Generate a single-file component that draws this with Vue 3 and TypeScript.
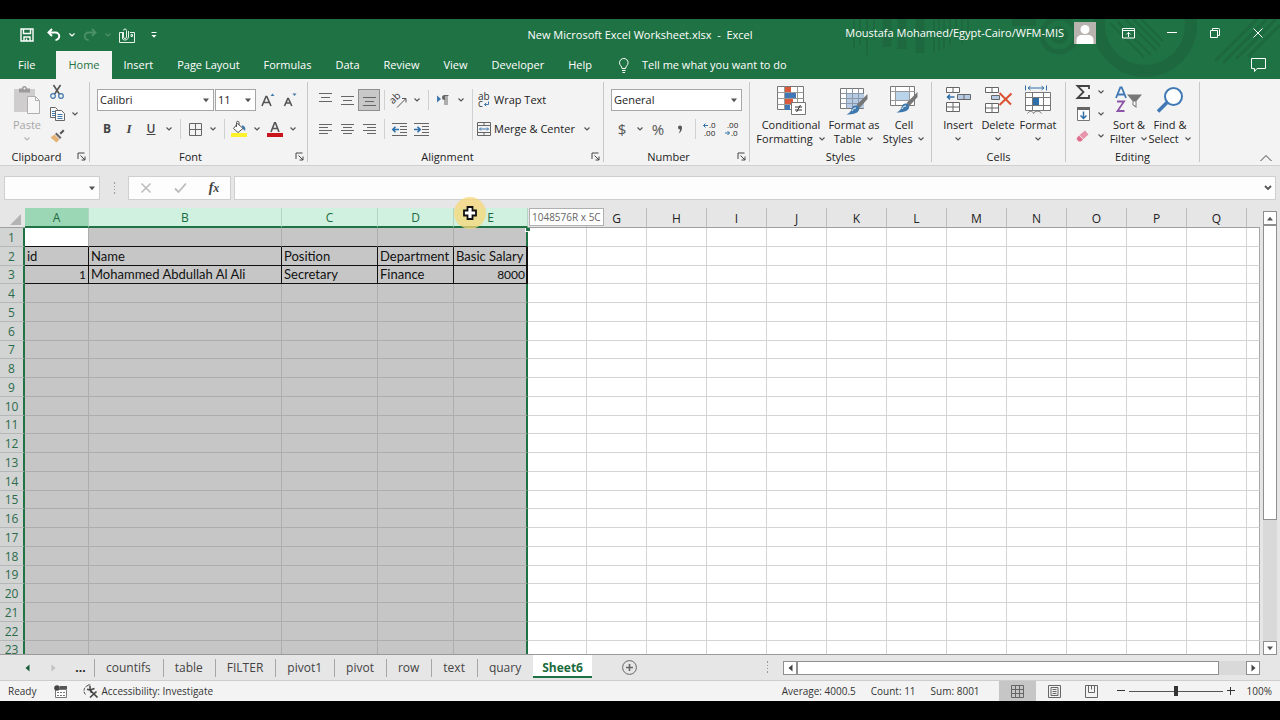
<script setup lang="ts">
import { h, ref } from 'vue'

const Chev = () =>
  h('svg', { viewBox: '0 0 8 6', class: 'chev', 'aria-hidden': 'true' }, [
    h('path', { d: 'M1.5 1.5 4 4l2.5-2.5', fill: 'none', stroke: 'currentColor', 'stroke-width': '1.2' }),
  ])
const Launcher = () =>
  h('button', { class: 'launcher', 'aria-label': 'More options' }, [
    h('svg', { viewBox: '0 0 9 9', width: 9, height: 9 }, [
      h('path', { d: 'M1 7V1h6.5M3.5 3.5 8 8M8 4.5V8H4.5', fill: 'none', stroke: '#444' }),
    ]),
  ])
const Caret = () =>
  h('svg', { viewBox: '0 0 8 5', class: 'caret', 'aria-hidden': 'true' }, [
    h('path', { d: 'M1 .5h6L4 4.2z', fill: '#555' }),
  ])

const tabs = ['File', 'Home', 'Insert', 'Page Layout', 'Formulas', 'Data', 'Review', 'View', 'Developer', 'Help']
const activeTab = ref('Home')

const columns = 'ABCDEFGHIJKLMNOPQ'.split('')
const rowCount = 23
const cells: Record<string, string> = {
  A2: 'id', B2: 'Name', C2: 'Position', D2: 'Department', E2: 'Basic Salary',
  A3: '1', B3: 'Mohammed Abdullah Al Ali', C3: 'Secretary', D3: 'Finance', E3: '8000',
}
const isNumber = (v?: string) => v !== undefined && /^\d+$/.test(v)
const isSelected = (c: string) => c <= 'E'
// The size tip covers the letter of the column right of the selection.
const coveredByTip = 'F'

const sheets = ['countifs', 'table', 'FILTER', 'pivot1', 'pivot', 'row', 'text', 'quary', 'Sheet6']
const activeSheet = ref('Sheet6')
const zoom = ref(50)
const vertical = ['Top Align', 'Middle Align', 'Bottom Align']
const textLines = [
  'M0 .5h13M0 3.5h9M0 6.5h13M0 9.5h9',
  'M0 .5h13M2 3.5h9M0 6.5h13M2 9.5h9',
  'M0 .5h13M4 3.5h9M0 6.5h13M4 9.5h9',
]
const horizontal = ['Align Left', 'Center', 'Align Right']
</script>

<template>
  <div class="screen">
    <header class="head">
      <svg class="decor" viewBox="0 0 440 60" width="440" height="60" fill="none" stroke="#1d683e" aria-hidden="true">
        <path d="M14 0v30M20 0v26M27 0v36M34 0v22M94 0v34M99 0v32M104 0v30M110 0v26M116 0v20M122 0v24M128 0v18" stroke-width="2" />
        <path d="M47 0v28M62 0v30M80 0v34" stroke-width="9" />
        <circle cx="219" cy="16" r="17" stroke-width="5" />
        <circle cx="219" cy="16" r="7" stroke-width="4" />
        <circle cx="305" cy="6" r="46" stroke-width="12" />
        <path d="M270 4l34 34M277 2l34 34M285 0l32 32M293 0l27 27M301 0l22 22" stroke-width="2" />
        <path d="M375 42 417 0M383 44 427 0M396 40 436 0M408 38l32-32" stroke-width="3" />
        <path d="M172 3h24" stroke-width="8" />
      </svg>
      <div class="titlebar">
        <div class="quick">
          <button class="q-save" aria-label="Save">
            <svg viewBox="0 0 14 14" width="14" height="14" fill="none" stroke="#fff" stroke-width="1.4"><path d="M1 1h12v12H1z" /><path d="M3.5 1v4.5h7V1" /><path d="M4 13V9h6v4" /><path d="M6.5 10.5V13" /></svg>
          </button>
          <button class="q-undo" aria-label="Undo">
            <svg viewBox="0 0 14 14" width="14" height="14" fill="none" stroke="#fff" stroke-width="2"><path d="M5 1 1.5 4.5 5 8" /><path d="M2 4.500h6.500a3.500 3.500 0 0 1 0 7.500" /></svg>
          </button>
          <button class="q-chev light" aria-label="Undo list"><Chev /></button>
          <button class="q-undo dim" aria-label="Redo" disabled>
            <svg viewBox="0 0 14 14" width="14" height="14" fill="none" stroke="#4b9069" stroke-width="1.8"><path d="M9 1l3.500 3.500L9 8" /><path d="M12 4.500H5.500a3.500 3.500 0 0 0 0 7.500" /></svg>
          </button>
          <button class="q-chev dim" aria-label="Redo list" disabled><Chev /></button>
          <button class="q-mail" aria-label="Attach to mail">
            <svg viewBox="0 0 16 15" width="16" height="15" fill="none" stroke="#e6f2ea"><path d="M3 4.500H.5v10h15v-10H11" /><path d="M4.500 4v5a1.500 1.500 0 0 0 3 0V2.500a1.500 1.500 0 0 0-3 0M9.500 3v6a3.500 3.500 0 0 1-6 2V4" /><path d="M12 6.500h1.500v2H12z" /></svg>
          </button>
          <button class="q-more" aria-label="Customize toolbar">
            <svg viewBox="0 0 8 8" width="8" height="8"><path d="M1.500 1.500h5" stroke="#fff" /><path d="M1.500 4h5L4 6.800z" fill="#fff" /></svg>
          </button>
        </div>
        <div class="title">New Microsoft Excel Worksheet.xlsx&nbsp; -&nbsp; Excel</div>
        <div class="account">
          <span>Moustafa Mohamed/Egypt-Cairo/WFM-MIS</span>
          <svg class="avatar" viewBox="0 0 22 22" width="22" height="22"><path d="M0 0h22v22H0z" fill="#b9b3b0" /><circle cx="11" cy="7.500" r="4.500" fill="#fff" /><path d="M2.500 22v-3.500c0-4 3-5.500 4.500-5.500h8c1.500 0 4.500 1.500 4.500 5.500V22z" fill="#fff" /></svg>
          <button class="win" aria-label="Ribbon display options"><svg viewBox="0 0 13 11" width="13" height="11" fill="none" stroke="#fff"><path d="M.5.500h12v9.500H.5zM.5 2.500h12M6.500 9V4.500M4.300 6.500 6.500 4.300l2.200 2.200" /></svg></button>
          <button class="win" aria-label="Minimize"><svg viewBox="0 0 10 10" width="10" height="10" stroke="#fff"><path d="M0 4.500h10" /></svg></button>
          <button class="win" aria-label="Restore"><svg viewBox="0 0 10 10" width="10" height="10" fill="none" stroke="#fff"><path d="M.5 2.500h7v7h-7z" /><path d="M2.500 2.500v-2h6a1 1 0 0 1 1 1v6h-2" /></svg></button>
          <button class="win" aria-label="Close"><svg viewBox="0 0 10 10" width="10" height="10" stroke="#fff"><path d="M.5.500l9 9M9.500.500l-9 9" /></svg></button>
        </div>
      </div>
      <nav class="tabs">
        <button v-for="t in tabs" :key="t" :class="{ on: t === activeTab, file: t === 'File' }" @click="activeTab = t">{{ t }}</button>
        <button class="tell">
          <svg viewBox="0 0 12 15" width="12" height="15" fill="none" stroke="#fff"><path d="M4 10.500C4 8 1.500 7.500 1.500 4.800a4.300 4.300 0 0 1 8.600 0c0 2.700-2.500 3.200-2.500 5.700zM4 12.500h3.600M4.500 14.500h2.600" /></svg>
          <span>Tell me what you want to do</span>
        </button>
        <button class="comment" aria-label="Comments"><svg viewBox="0 0 15 14" width="15" height="14" fill="none" stroke="#fff"><path d="M.5.500h14v10H6l-2.500 3v-3h-3z" /></svg></button>
      </nav>
    </header>

    <section class="ribbon" aria-label="Ribbon">
      <div class="group clipboard">
        <div class="body">
          <button class="big paste" disabled>
            <svg viewBox="0 0 28 30" width="28" height="30"><path d="M1 4h21v23H1z" fill="#cfcdcd" /><path d="M6 3.500h3a2.500 2.500 0 0 1 5 0h3v4H6z" fill="#9c9a9a" /><circle cx="11.500" cy="3.500" r="1" fill="#f3f3f3" /><path d="M14.500 11.500h8l4 4v13h-12z" fill="#f6f6f6" stroke="#b0aeae" /><path d="M22.500 11.500v4h4" fill="none" stroke="#b0aeae" /></svg>
            <span>Paste</span>
            <Chev />
          </button>
          <div class="stack clip">
            <div><button class="ic" aria-label="Cut"><svg viewBox="0 0 14 14" width="14" height="14" fill="none"><path d="M3.500 0 9.300 9M10.500 0 4.700 9" stroke="#555" stroke-width="1.600" /><circle cx="3" cy="11" r="2.300" stroke="#3f78ad" stroke-width="1.200" /><circle cx="11" cy="11" r="2.300" stroke="#3f78ad" stroke-width="1.200" /></svg></button></div>
            <div><button class="ic" aria-label="Copy"><svg viewBox="0 0 15 14" width="15" height="14" fill="#f8f8f8" stroke="#666"><path d="M.5.500h5l2 2v8h-7z" /><path d="M2 4.500h3M2 6.500h3M2 8.500h3" stroke="#3f78ad" /><path d="M5.500 3.500h6l3 3v7h-9z" /><path d="M7.500 7.500h5M7.500 9.500h5M7.500 11.500h5" stroke="#3f78ad" /></svg></button><button class="ch" aria-label="Copy options"><Chev /></button></div>
            <div><button class="ic" aria-label="Format Painter"><svg viewBox="0 0 15 14" width="15" height="14"><path d="M9.500 4 13 .5 14.500 2 11 5.500z" fill="#555" /><path d="M6.500 3.500 11.500 8.500 10 10 5 5z" fill="#666" /><path d="M4.500 5.500 9.500 10.500 6.500 13.500.5 8.500z" fill="#e3b274" /></svg></button></div>
          </div>
        </div>
        <footer><span>Clipboard</span><Launcher /></footer>
      </div>

      <div class="group font">
        <div class="body rows">
          <div class="line">
            <label class="combo wide"><select aria-label="Font"><option>Calibri</option></select><Caret /></label>
            <label class="combo size"><select aria-label="Font size"><option>11</option></select><Caret /></label>
            <button class="ic grow" aria-label="Increase font size"><svg viewBox="0 0 14 14" width="14" height="14"><path d="M1 13 5 3.500h.8L10 13M2.500 9.500h6" fill="none" stroke="#555" stroke-width="1.600" /><path d="M9.500 3h4L11.500.5z" fill="#3f78ad" /></svg></button>
            <button class="ic" aria-label="Decrease font size"><svg viewBox="0 0 14 14" width="14" height="14"><path d="M1.500 13 4.800 5.500h.6L8.800 13M2.800 10h5" fill="none" stroke="#555" stroke-width="1.600" /><path d="M9.500.500h4L11.500 3z" fill="#3f78ad" /></svg></button>
          </div>
          <div class="line">
            <button class="ic letter bold">B</button>
            <button class="ic letter italic">I</button>
            <button class="ic letter under">U</button>
            <button class="ch" aria-label="Underline options"><Chev /></button>
            <i class="sep" />
            <button class="ic" aria-label="Borders"><svg viewBox="0 0 13 13" width="13" height="13" fill="none" stroke="#666"><path d="M.5.500h12v12H.5zM6.500.500v12M.5 6.500h12" /></svg></button>
            <button class="ch" aria-label="Border options"><Chev /></button>
            <i class="sep" />
            <button class="ic" aria-label="Fill color"><svg viewBox="0 0 16 16" width="16" height="16"><path d="M6.500 2.500 12 7.500 7 11.500 2.500 7.500z" fill="#fff" stroke="#555" /><path d="M5.500 6V1.500a1 1 0 0 1 2.500 0V4" fill="none" stroke="#555" /><path d="M10.500 4.500c3 0 4.500 2 3.500 5.500L12 8z" fill="#3f78ad" /><path d="M0 12h16v4H0z" fill="#fdf22b" /></svg></button>
            <button class="ch" aria-label="Fill color options"><Chev /></button>
            <button class="ic" aria-label="Font color"><svg viewBox="0 0 16 16" width="16" height="16"><path d="M4 11 7.600 1.800h.8L12 11M5.500 7.500h5" fill="none" stroke="#555" stroke-width="1.600" /><path d="M0 12h16v4H0z" fill="#c8141b" /></svg></button>
            <button class="ch" aria-label="Font color options"><Chev /></button>
          </div>
        </div>
        <footer><span>Font</span><Launcher /></footer>
      </div>

      <div class="group alignment">
        <div class="body">
          <div class="rows">
            <div class="line">
              <button v-for="(name, i) in vertical" :key="name" class="ic" :class="['v' + i]" :aria-label="name">
                <svg viewBox="0 0 13 9" width="13" height="9" stroke="#666"><path d="M0 .5h13M2 4.500h9M0 8.500h13" /></svg>
              </button>
              <i class="sep" />
              <button class="ic" aria-label="Orientation"><svg viewBox="0 0 16 16" width="16" height="16"><text x="1" y="12" font-size="10" fill="#333" transform="rotate(-45 2 11)">ab</text><path d="M6 15.500 14.500 7M11 6.500h4v4" fill="none" stroke="#555" /></svg></button>
              <button class="ch" aria-label="Orientation options"><Chev /></button>
              <i class="sep" />
              <button class="ic" aria-label="Text direction"><svg viewBox="0 0 14 12" width="14" height="12"><path d="M1 1.500 5 5 1 8.500z" fill="#3f78ad" /><path d="M12.500 1H8.500a2.500 2.500 0 0 0 0 5v5h1V2h1v9h1V2h1z" fill="#666" /></svg></button>
              <button class="ch" aria-label="Text direction options"><Chev /></button>
            </div>
            <div class="line">
              <button v-for="(d, i) in textLines" :key="i" class="ic" :aria-label="horizontal[i]">
                <svg viewBox="0 0 13 10" width="13" height="10" stroke="#666"><path :d="d" /></svg>
              </button>
              <i class="sep" />
              <button class="ic" aria-label="Decrease indent"><svg viewBox="0 0 15 13" width="15" height="13" stroke="#666" fill="none"><path d="M0 .5h15M8 3.500h7M8 6.500h7M8 9.500h7M0 12.500h15" /><path d="M7 6.500H1M3.500 3.800.8 6.500l2.700 2.700" stroke="#2f6fa8" stroke-width="1.600" /></svg></button>
              <button class="ic" aria-label="Increase indent"><svg viewBox="0 0 15 13" width="15" height="13" stroke="#666" fill="none"><path d="M0 .5h15M8 3.500h7M8 6.500h7M8 9.500h7M0 12.500h15" /><path d="M0 6.500h6M3.500 3.800l2.700 2.700-2.700 2.700" stroke="#2f6fa8" stroke-width="1.600" /></svg></button>
            </div>
          </div>
          <i class="sep tall" />
          <div class="rows">
            <button class="line text"><svg viewBox="0 0 16 16" width="16" height="16"><text x="2" y="8" font-size="10" fill="#333">ab</text><text x="2" y="15" font-size="10" fill="#333">c</text><path d="M12.500 9.500v3H8.500M10.200 10.800l-1.700 1.700 1.700 1.700" fill="none" stroke="#3f78ad" /></svg><span>Wrap Text</span></button>
            <button class="line text"><svg viewBox="0 0 16 15" width="16" height="15" fill="none" stroke="#666"><path d="M1.500.500h13v13h-13zM1.500 3.500h13M1.500 10.500h13M8 .5v3M8 10.500v3" /><path d="M3.500 7h9M5 5.500 3.500 7 5 8.500M11 5.500 12.500 7 11 8.500" stroke="#3f78ad" /></svg><span>Merge &amp; Center</span><Chev class="far" /></button>
          </div>
        </div>
        <footer><span>Alignment</span><Launcher /></footer>
      </div>

      <div class="group number">
        <div class="body rows">
          <div class="line"><label class="combo full"><select aria-label="Number format"><option>General</option></select><Caret /></label></div>
          <div class="line">
            <button class="ic sym">$</button>
            <button class="ch" aria-label="Currency options"><Chev /></button>
            <button class="ic sym">%</button>
            <button class="ic sym" aria-label="Comma style"><svg viewBox="0 0 6 9" width="6" height="9"><path d="M1 2.500a2 2 0 0 1 4 0C5 5 4 7.500 1.500 8.500 2.500 7 3 6 3 4.500a2 2 0 0 1-2-2z" fill="#555" /></svg></button>
            <i class="sep" />
            <button class="ic" aria-label="Increase decimal"><svg viewBox="0 0 15 14" width="15" height="14"><text x="6" y="6" font-size="8" fill="#222">.0</text><text x="1" y="14" font-size="8" fill="#222">.00</text><path d="M5 3.500H.5M2.500 1.500l-2 2 2 2" fill="none" stroke="#2f6fa8" /></svg></button>
            <button class="ic" aria-label="Decrease decimal"><svg viewBox="0 0 15 14" width="15" height="14"><text x="2" y="6" font-size="8" fill="#222">.00</text><text x="6" y="14" font-size="8" fill="#222">.0</text><path d="M0 11h4.500M2.500 9l2 2-2 2" fill="none" stroke="#2f6fa8" /></svg></button>
          </div>
        </div>
        <footer><span>Number</span><Launcher /></footer>
      </div>

      <div class="group styles">
        <div class="body">
          <button class="big w68"><svg viewBox="0 0 30 30" width="30" height="30"><path d="M1.500 1.500h26v23h-26z" fill="#fff" stroke="#777" /><path d="M1.500 7.500h26M1.500 13.500h26M1.500 19.500h26M8.500 1.500v23M21.500 1.500v23" stroke="#999" fill="none" /><path d="M9 2h6v5H9zM9 14h8v5H9z" fill="#d8593b" /><path d="M9 8h11v5H9zM9 20h5v5H9z" fill="#3f78b5" /><path d="M15.500 17.500h14v12h-14z" fill="#fff" stroke="#777" /><path d="M19 22h7M19 25h7M24.500 20l-4 7" stroke="#333" fill="none" /></svg><span>Conditional<br />Formatting <Chev /></span></button>
          <button class="big w58"><svg viewBox="0 0 28 30" width="28" height="30"><path d="M.5 3.500h23v20H.5z" fill="#fff" stroke="#777" /><path d="M6.500 9H24v14H6.500z" fill="#b8cbe4" /><path d="M.5 8.500h23M.5 13.500h23M.5 18.500h23M6.500 3.500v20M12.500 3.500v20M18.500 3.500v20" stroke="#8b98a8" fill="none" /><path d="M27.500 9v5l-8 9-3-3z" fill="#777" /><path d="M15.500 20.500c3 0 4.500 2 3.500 4.500-1.500 3.500-6 4.500-12.500 4.500 4-2 4.500-4 5.500-6.500.8-1.700 2-2.500 3.500-2.500z" fill="#3f78ad" /><path d="M12 26c1-2.500 2.500-3 4-3" stroke="#fff" fill="none" /></svg><span>Format as<br />Table <Chev /></span></button>
          <button class="big w42"><svg viewBox="0 0 28 30" width="28" height="30"><path d="M.5 1.500h24v19H.5z" fill="#fff" stroke="#777" /><path d="M5.500 1.500v19M19.500 1.500v19M.5 6.500h24M.5 15.500h24" stroke="#999" fill="none" /><path d="M6 7h13v8H6z" fill="#b8d3ea" /><path d="M27.500 7v5l-8 9-3-3z" fill="#777" /><path d="M15.500 18.500c3 0 4.500 2 3.500 4.500-1.500 3.500-6 4.500-12.500 4.500 4-2 4.500-4 5.500-6.500.8-1.700 2-2.500 3.500-2.500z" fill="#3f78ad" /><path d="M12 24c1-2.500 2.500-3 4-3" stroke="#fff" fill="none" /></svg><span>Cell<br />Styles <Chev /></span></button>
        </div>
        <footer><span>Styles</span></footer>
      </div>

      <div class="group cells">
        <div class="body">
          <button class="big w40"><svg viewBox="0 0 26 30" width="26" height="30" fill="#fff" stroke="#666"><path d="M1.500 2.500h13v5h-13zM8 2.500v5M1.500 17.500h13v9h-13zM8 17.500v9M1.500 22h13" /><path d="M12.500 9.500h13v5h-13zM19 9.500v5" fill="#b8cbe4" /><path d="M9.500 12h-7M5 9.500 2.500 12 5 14.500" fill="none" stroke="#2f6fa8" stroke-width="1.500" /></svg><span>Insert</span><Chev /></button>
          <button class="big w40"><svg viewBox="0 0 28 30" width="28" height="30" fill="#fff" stroke="#666"><path d="M1.500 2.500h13v5h-13zM8 2.500v5M1.500 18.500h13v9h-13zM8 18.500v9M1.500 23h13" /><path d="M7.500 10.500h8v4h-8z" fill="#b8cbe4" /><path d="M15.500 8 27 19.500M27.500 8.500 15.500 20" fill="none" stroke="#d9512f" stroke-width="2" /></svg><span>Delete</span><Chev /></button>
          <button class="big w40"><svg viewBox="0 0 28 30" width="28" height="30" fill="#fff" stroke="#777"><path d="M1.500 7.500h25v18h-25zM8.500 7.500v18M19.500 7.500v18M1.500 12.500h25M1.500 20.500h25" /><path d="M9 13h6v7H9z" fill="#2f6fa8" stroke="none" /><path d="M3.500 28.500c2-3 5-3 6 0 1-3 7-3 8 0" fill="none" /><path d="M1.500.500v5M22.500.500v5M4 3h16M6.500 1 4 3l2.500 2M17.500 1 20 3l-2.500 2" fill="none" stroke="#2f6fa8" /></svg><span>Format</span><Chev /></button>
        </div>
        <footer><span>Cells</span></footer>
      </div>

      <div class="group editing">
        <div class="body">
          <div class="stack edit">
            <div><button class="ic" aria-label="AutoSum"><svg viewBox="0 0 14 14" width="14" height="14"><path d="M13 4V1H1.500l6 6-6 6H13v-3" fill="none" stroke="#444" stroke-width="1.800" /></svg></button><button class="ch" aria-label="AutoSum options"><Chev /></button></div>
            <div><button class="ic" aria-label="Fill"><svg viewBox="0 0 13 14" width="13" height="14"><path d="M.5.500h12v13H.5z" fill="#fff" stroke="#777" /><path d="M0 0h13v3H0z" fill="#666" /><path d="M6.500 4.500v7M3.500 8.500l3 3 3-3" fill="none" stroke="#2f6fa8" stroke-width="1.500" /></svg></button><button class="ch" aria-label="Fill options"><Chev /></button></div>
            <div><button class="ic" aria-label="Clear"><svg viewBox="0 0 14 12" width="14" height="12"><path d="M9 .5l3.500 4-5 4.500-4-4z" fill="#e794ad" /><path d="M3 5.500l4 4-2 2H2.500L.8 9.500V8z" fill="#e0708f" /></svg></button><button class="ch" aria-label="Clear options"><Chev /></button></div>
          </div>
          <button class="big w42"><svg viewBox="0 0 28 30" width="28" height="30"><path d="M1 13 5.300 2.500h1.400L11 13M2.800 9.500h6.400" fill="none" stroke="#3f78b5" stroke-width="1.800" /><path d="M2 16.500h7L2.500 26H9.500" fill="none" stroke="#8b54a8" stroke-width="1.800" /><path d="M12 9.500h15l-5.500 6.500v7l-4-3v-4z" fill="#777" /><path d="M18.500 16.500v3l2 1.500v-4.500z" fill="#fff" /></svg><span>Sort &amp;<br />Filter <Chev /></span></button>
          <button class="big w40"><svg viewBox="0 0 28 30" width="28" height="30" fill="none"><circle cx="17.500" cy="11.500" r="8.500" fill="#fff" stroke="#3f78b5" stroke-width="2" /><path d="M11 17.500 2 26.500" stroke="#3f78b5" stroke-width="3.500" /></svg><span>Find &amp;<br />Select <Chev /></span></button>
        </div>
        <footer><span>Editing</span></footer>
      </div>
      <button class="collapse" aria-label="Collapse ribbon"><svg viewBox="0 0 12 8" width="12" height="8" fill="none" stroke="#444"><path d="M.5 7 6 1.500 11.500 7" /></svg></button>
    </section>

    <section class="formula">
      <label class="combo namebox"><input aria-label="Name box" /><Caret /></label>
      <svg class="dots" viewBox="0 0 3 12" width="3" height="12" fill="#999"><path d="M1 0h1v2H1zM1 4h1v1H1zM1 7h1v1H1zM1 10h1v2H1z" /></svg>
      <div class="fx">
        <button aria-label="Cancel"><svg viewBox="0 0 12 12" width="12" height="12" stroke="#bbb" stroke-width="1.500"><path d="M1.500 1.500l9 9M10.500 1.500l-9 9" /></svg></button>
        <button aria-label="Enter"><svg viewBox="0 0 13 12" width="13" height="12" fill="none" stroke="#bbb" stroke-width="1.800"><path d="M1 6.500 4.500 10 12 1.500" /></svg></button>
        <button class="fn" aria-label="Insert function"><span>f<small>x</small></span></button>
      </div>
      <label class="bar"><input aria-label="Formula bar" /><svg viewBox="0 0 8 6" width="8" height="6" fill="none" stroke="#555" stroke-width="1.800"><path d="M1 1l3 3 3-3" /></svg></label>
    </section>

    <main class="work">
      <div class="sheet">
        <table>
          <colgroup>
            <col class="c-row" /><col class="c-a" /><col class="c-b" /><col class="c-c" /><col class="c-d" /><col class="c-e" /><col class="c-f" />
            <col v-for="n in 11" :key="n" class="c-std" /><col />
          </colgroup>
          <thead>
            <tr>
              <th class="corner"><svg viewBox="0 0 11 11" width="11" height="11"><path d="M11 0v11H0z" fill="#b4b4b4" /></svg></th>
              <th v-for="c in columns" :key="c" :class="{ sel: isSelected(c), first: c === 'A' }">{{ c === coveredByTip ? '' : c }}</th>
              <th class="edge" />
            </tr>
          </thead>
          <tbody>
            <tr v-for="r in rowCount" :key="r" :class="{ boxed: r === 2 || r === 3, above: r === 1 }">
              <th>{{ r }}</th>
              <td v-for="c in columns" :key="c" :class="{ sel: isSelected(c), last: c === 'E', cursor: c + r === 'A1', num: isNumber(cells[c + r]) }">{{ cells[c + r] }}</td>
              <td class="edge" />
            </tr>
          </tbody>
        </table>
      </div>
      <div class="vscroll">
        <button aria-label="Scroll up"><svg viewBox="0 0 8 5" width="8" height="5"><path d="M1 4.500h6L4 .8z" fill="#555" /></svg></button>
        <div class="vthumb" />
        <div class="vtrack" />
        <button aria-label="Scroll down"><svg viewBox="0 0 8 5" width="8" height="5"><path d="M1 .5h6L4 4.200z" fill="#555" /></svg></button>
      </div>
      <i class="handle" />
      <div class="tip">1048576R x 5C</div>
      <div class="halo"><svg viewBox="0 0 14 14" width="14" height="14"><path d="M4.500 1h5v3.500H13v5H9.500V13h-5V9.500H1v-5h3.500z" fill="#fff" stroke="#111" stroke-width="1.800" /></svg></div>
    </main>

    <nav class="sheets">
      <div class="arrows">
        <button aria-label="Previous sheet"><svg viewBox="0 0 5 8" width="5" height="8"><path d="M4.500.500v7L.5 4z" fill="#185c37" /></svg></button>
        <button aria-label="Next sheet"><svg viewBox="0 0 5 8" width="5" height="8"><path d="M.5.500v7l4-3.500z" fill="#c0c0c0" /></svg></button>
        <button class="ell">...</button>
      </div>
      <button v-for="s in sheets" :key="s" class="tab" :class="{ on: s === activeSheet }" @click="activeSheet = s">{{ s }}</button>
      <button class="add" aria-label="New sheet"><svg viewBox="0 0 15 15" width="15" height="15" fill="none" stroke="#666"><circle cx="7.500" cy="7.500" r="6.900" /><path d="M7.500 4v7M4 7.500h7" stroke-width="1.600" /></svg></button>
      <svg class="dots" viewBox="0 0 3 12" width="3" height="12" fill="#999"><path d="M1 0h1v2H1zM1 4h1v1H1zM1 7h1v1H1zM1 10h1v2H1z" /></svg>
      <div class="hscroll">
        <button aria-label="Scroll left"><svg viewBox="0 0 5 8" width="5" height="8"><path d="M4.500.500v7L.5 4z" fill="#444" /></svg></button>
        <div class="hthumb" />
        <div class="htrack" />
        <button aria-label="Scroll right"><svg viewBox="0 0 5 8" width="5" height="8"><path d="M.5.500v7l4-3.500z" fill="#444" /></svg></button>
      </div>
    </nav>

    <footer class="status">
      <span class="ready">Ready</span>
      <svg class="macro" viewBox="0 0 13 13" width="13" height="13"><path d="M1.500 4.500h11v8h-11z" fill="#fff" stroke="#777" /><path d="M6 1h7v3H6z" fill="#555" /><circle cx="3" cy="3" r="2.800" fill="#444" /><path d="M3 7.500h8M3 10.500h8" stroke="#777" stroke-dasharray="2 1" /></svg>
      <button class="access">
        <svg viewBox="0 0 15 14" width="15" height="14" fill="none" stroke="#444"><path d="M5 1.500A5.500 5.500 0 0 0 3 11M5 1l2.500 0" stroke-dasharray="3 1" /><path d="M7 2v4l-3-.8M7 6l4.500-1.500M7 6l1.500 3" stroke-width="1.500" /><path d="M7.500 6.500l7 7M13.500 7.500l-6.500 6" stroke-width="1.700" /></svg>
        <span>Accessibility: Investigate</span>
      </button>
      <span class="sums"><span>Average: 4000.5</span><span>Count: 11</span><span>Sum: 8001</span></span>
      <div class="views">
        <button class="on" aria-label="Normal view"><svg viewBox="0 0 13 13" width="13" height="13" fill="none" stroke="#666"><path d="M.5.500h12v12H.5zM4.500.500v12M8.500.500v12M.5 4.500h12M.5 8.500h12" /></svg></button>
        <button aria-label="Page layout view"><svg viewBox="0 0 13 13" width="13" height="13" fill="none" stroke="#666"><path d="M.5.500h12v12H.5zM3 2.500h7v8H3zM4.500 4.500h4M4.500 6.500h4M4.500 8.500h4" /></svg></button>
        <button aria-label="Page break view"><svg viewBox="0 0 13 13" width="13" height="13" fill="none" stroke="#666"><path d="M.5.500h12v12H.5zM3.500 .5v7h6v-7M6.500.500v4" /></svg></button>
      </div>
      <div class="zoom">
        <button aria-label="Zoom out"><svg viewBox="0 0 8 8" width="8" height="8" stroke="#333"><path d="M0 3.500h8" /></svg></button>
        <input v-model="zoom" type="range" min="0" max="100" aria-label="Zoom" />
        <button aria-label="Zoom in"><svg viewBox="0 0 8 8" width="8" height="8" stroke="#333"><path d="M0 3.500h8M3.500 0v8" /></svg></button>
        <span>100%</span>
      </div>
    </footer>
  </div>
</template>

<style>
body { background: #000; }
</style>

<style scoped>
* { box-sizing: border-box; }
.screen {
  height: 100vh; padding: 19px 0; background: #000; display: flex; flex-direction: column;
  font-family: "Open Sans", "Noto Sans", sans-serif; font-size: 11px; line-height: 14px; color: #222;
}
button, input, select { font: inherit; color: inherit; border: 0; padding: 0; margin: 0; background: none; outline: 0; border-radius: 0; }
button { display: flex; align-items: center; justify-content: center; flex: none; white-space: nowrap; }
svg { flex: none; display: block; overflow: visible; }
.chev { width: 8px; height: 6px; color: #555; }
.caret { width: 8px; height: 5px; }

.head { position: relative; background: #1f7244; color: #fff; flex: none; overflow: hidden; }
.decor { position: absolute; right: 0; top: 0; }
.titlebar { position: relative; height: 32px; display: grid; grid-template-columns: 1fr auto 1fr; align-items: center; }
.quick { display: flex; align-items: center; padding-left: 16px; }
.q-save { width: 22px; margin-right: 5px; }
.q-undo { width: 22px; }
.q-chev { width: 14px; }
.light .chev { color: #fff; }
.dim .chev { color: #4b9069; }
.q-mail { width: 24px; }
.q-more { width: 16px; margin-left: 7px; padding: 4px; }
.account { display: flex; align-items: center; justify-content: flex-end; padding-right: 1px; height: 28px; align-self: start; }
.avatar { margin: 0 11px 0 10px; }
.win { width: 43px; height: 28px; }
.tabs { position: relative; height: 28px; display: flex; align-items: stretch; padding-left: 6px; }
.tabs button { padding: 0 12px; }
.tabs button.file { margin-right: 9px; }
.tabs button.on { background: #f3f3f3; color: #1f7244; }
.tabs .tell { gap: 12px; padding: 0 14px; }
.tabs .comment { margin-left: auto; width: 43px; padding: 0; }

.ribbon { height: 87px; flex: none; display: flex; background: #f3f3f3; border-bottom: 1px solid #d0d0d0; }
.group { position: relative; display: flex; flex-direction: column; border-right: 1px solid #c8c8c8; margin: 3px 0 3px; flex: none; }
.body { height: 65px; flex: none; display: flex; }
.group > footer { display: flex; height: 18px; flex: none; align-items: center; color: #222; padding-top: 1px; }
.group > footer > span { flex: 1; text-align: center; }
.launcher { width: 16px; height: 16px; }
.clipboard { width: 90px; }
.font { width: 218px; padding-left: 6px; }
.font > footer { margin-left: -6px; }
.alignment { width: 296px; padding-left: 6px; }
.alignment > footer { margin-left: -6px; }
.number { width: 146px; padding-left: 7px; }
.number > footer { margin-left: -7px; }
.styles { width: 182px; padding-left: 7px; }
.styles > footer { margin-left: -7px; }
.cells { width: 134px; padding-left: 6px; }
.cells > footer { margin-left: -6px; }
.editing { width: 134px; padding-left: 6px; }
.editing > footer { margin-left: -6px; }
.rows { display: flex; flex-direction: column; padding-top: 7px; gap: 7px; }
.line { display: flex; align-items: center; height: 22px; }
.ic { width: 22px; height: 22px; }
.ch { width: 14px; height: 22px; }
.sep { width: 1px; height: 20px; background: #d0d0d0; margin: 0 3px 0 4px; flex: none; }
.sep.tall { height: 51px; margin-top: 7px; }
.big { flex-direction: column; justify-content: flex-start; padding-top: 3px; text-align: center; height: 65px; }
.big > svg:first-child { height: 30px; margin-bottom: 3px; }
.big > .chev { margin-top: 4px; }
.big span .chev { display: inline-block; vertical-align: 1px; margin-left: 2px; }
.w68 { width: 68px; }
.w58 { width: 58px; }
.w42 { width: 42px; }
.w40 { width: 40px; }
.paste { width: 54px; color: #a6a6a6; }
.paste .chev { color: #b5b5b5; }
.stack { display: flex; flex-direction: column; justify-content: space-between; height: 64px; }
.stack > div { display: flex; }
.stack .ic { height: 20px; }
.stack .ch { height: 20px; }
.stack.clip { margin-left: -8px; }
.combo { position: relative; display: block; height: 22px; border: 1px solid #a6a6a6; background: #fff; }
.combo select, .combo input { appearance: none; width: 100%; height: 100%; padding: 0 2px; display: block; }
.combo .caret { position: absolute; right: 3px; top: 8px; }
.wide { width: 117px; margin: 0 1px; }
.size { width: 41px; }
.full { width: 131px; }
.grow { margin-left: 1px; }
.letter { font-size: 12px; color: #444; }
.bold { font-weight: 700; }
.italic { font-style: italic; font-family: "Liberation Serif", serif; font-weight: 700; font-size: 13px; }
.under { text-decoration: underline; font-weight: 600; }
.sym { font-size: 15px; color: #555; }
.v0 { align-items: flex-start; padding-top: 4px; }
.v2 { align-items: flex-end; padding-bottom: 4px; background: #c8c8c8; border: 1px solid #8f8f8f; }
.text { gap: 2px; justify-content: flex-start; }
.far { margin-left: 6px; }
.collapse { margin: auto 8px 3px auto; }

.formula { height: 42px; flex: none; display: flex; align-items: flex-start; padding: 10px 4px 0 4px; background: #e6e6e6; }
.formula .combo, .fx, .bar { height: 24px; border: 1px solid #cfcfcf; background: #fdfdfd; }
.namebox { width: 96px; }
.formula .namebox .caret { top: 9px; }
.formula .dots { margin: 6px 12px 0 13px; }
.fx { display: flex; width: 103px; margin-right: 3px; }
.fx button { width: 34px; height: 22px; }
.fx .fn { font: italic 700 14px "Liberation Serif", serif; color: #444; }
.fn small { font-size: 12px; }
.bar { flex: 1; display: flex; align-items: center; padding-right: 3px; }
.bar input { flex: 1; min-width: 0; }

.work { position: relative; flex: 1; min-height: 0; display: flex; background: #e6e6e6; }
.sheet { flex: 1; min-width: 0; overflow: hidden; border-bottom: 1px solid #9a9a9a; }
table { table-layout: fixed; width: 100%; border-collapse: separate; border-spacing: 0; }
.c-row { width: 25px; }
.c-a { width: 64px; }
.c-b { width: 193px; }
.c-c { width: 96px; }
.c-d { width: 76px; }
.c-e { width: 74px; }
.c-f { width: 59px; }
.c-std { width: 60px; }
th { font-weight: 400; font-size: 12px; padding: 0; text-align: center; }
thead th { height: 20px; padding-top: 2px; line-height: 16px; background: #e6e6e6; border-right: 1px solid #bdbdbd; border-bottom: 1px solid #9f9f9f; }
thead .sel { background: #d0f1df; color: #1c6a40; border-bottom: 2px solid #1f7244; border-right-color: #b5d5c4; }
thead .first { background: #9bd7b5; }
thead .corner { border-right: 0; }
.corner svg { margin: 2px 0 0 10px; }
thead .edge { border-right: 0; }
tbody tr { height: 19px; }
tbody tr:nth-child(4n + 3) { height: 18px; }
tbody th { line-height: 17px; background: #d2d3d3; color: #2c6b4a; border-bottom: 1px solid #b5b8b6; border-right: 2px solid #1f7244; }
td { padding: 0 2px; background: #fff; border-right: 1px solid #d4d4d4; border-bottom: 1px solid #d4d4d4; font-family: Lato, sans-serif; font-size: 13px; line-height: 17px; color: #111; white-space: nowrap; overflow: hidden; }
td.sel { background: #c6c6c6; border-color: #adadad; }
td.cursor { background: #fff; }
td.num { text-align: right; font-size: 12px; }
.above .sel { border-bottom-color: #111; }
.boxed .sel { border-color: #111; }
tbody td.last { border-right: 2px solid #1f7244; padding-right: 1px; }
td.edge { border-right-color: #a8a8a8; }
.vscroll { width: 20px; padding: 3px 3px 0; display: flex; flex-direction: column; }
.vscroll button { height: 14px; border: 1px solid #8f8f8f; background: #fff; }
.vthumb { flex: 295; background: #fff; border: 1px solid #8f8f8f; }
.vtrack { flex: 122; background: #d9d9d9; }
.handle { position: absolute; left: 525px; top: 20px; width: 5px; height: 4px; background: #1f7244; border: 1px solid #fff; border-top: 0; border-right: 0; }
.tip { position: absolute; left: 529px; top: 0; height: 18px; padding: 0 2px; line-height: 16px; font-size: 10px; border: 1px solid #b0b0b0; background: #fff; color: #666; }
.halo { position: absolute; left: 454px; top: -11px; width: 32px; height: 32px; border-radius: 50%; background: rgba(247, 215, 120, 0.75); display: flex; align-items: center; justify-content: center; }

.sheets { height: 26px; flex: none; display: flex; background: #e6e6e6; border-bottom: 1px solid #cdcdcd; padding-right: 20px; }
.arrows { display: flex; width: 94px; padding-left: 14px; }
.arrows button { width: 26px; height: 25px; }
.arrows .ell { font-weight: 700; font-size: 12px; padding-left: 3px; }
.tab { position: relative; height: 23px; padding: 2px 12px 0; font-size: 12px; color: #444; }
.tab::before { content: ""; position: absolute; left: 0; top: 4px; height: 18px; width: 1px; background: #a6a6a6; }
.tab.on { background: #fff; color: #1a6b3d; font-weight: 700; padding: 4px 9px 0; border-bottom: 2px solid #1f7244; }
.tab.on::before { display: none; }
.add { width: 30px; height: 25px; margin-left: 23px; }
.sheets .dots { margin: 6px 14px 0 auto; }
.hscroll { display: flex; flex: 0 1 477px; height: 14px; margin-top: 6px; }
.hscroll button { width: 14px; border: 1px solid #8f8f8f; background: #fff; }
.hthumb { flex: 422; border: 1px solid #8f8f8f; background: #fff; }
.htrack { flex: 27; background: #d9d9d9; }

.status { height: 20px; flex: none; display: flex; align-items: center; background: #f3f3f3; font-size: 10px; color: #333; padding: 0 8px; }
.macro { margin: 0 16px 0 18px; }
.access { gap: 3px; }
.sums { margin-left: auto; display: flex; gap: 15px; margin-right: 19px; }
.views { display: flex; }
.views button { width: 37px; height: 20px; }
.views .on { background: #c6c6c6; }
.zoom { display: flex; align-items: center; margin-left: 7px; }
.zoom button { width: 8px; height: 20px; }
.zoom input { appearance: none; width: 94px; height: 20px; margin: 0 4px; background: linear-gradient(#555, #555) center / 100% 1px no-repeat; }
.zoom input::-webkit-slider-thumb { appearance: none; width: 4px; height: 10px; background: #333; }
.zoom span { margin-left: 12px; }
</style>
